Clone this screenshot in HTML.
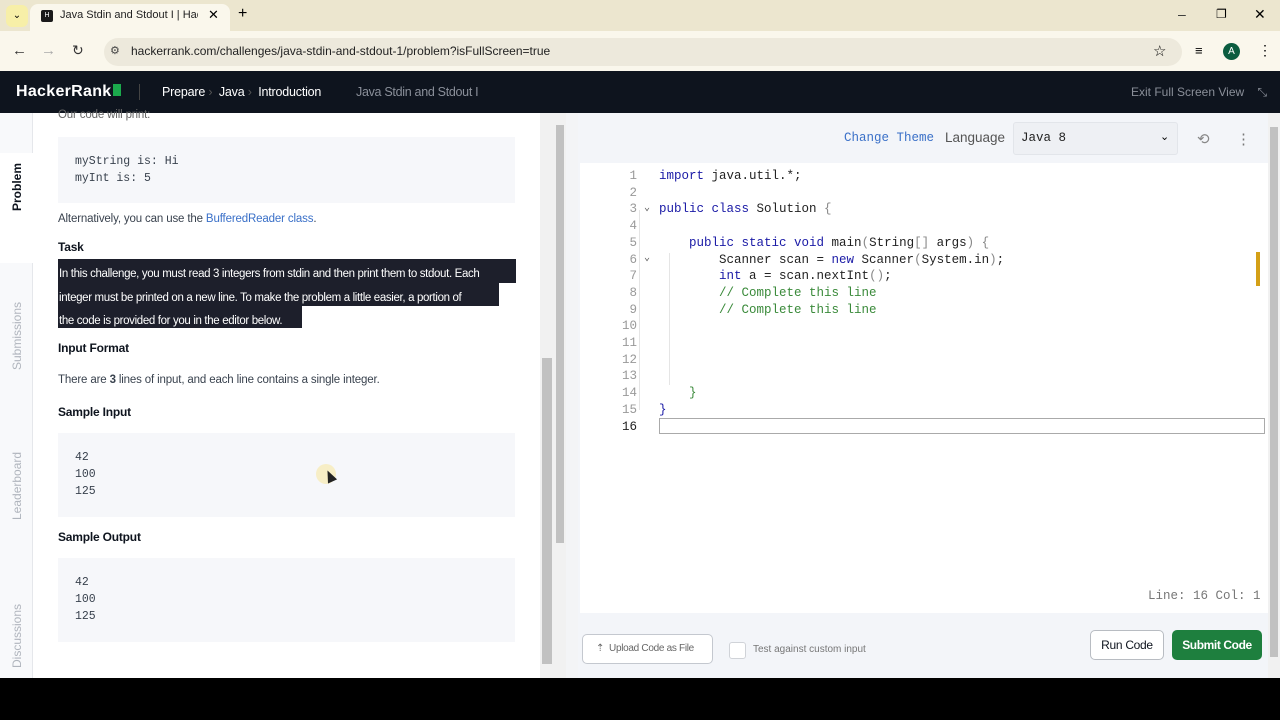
<!DOCTYPE html>
<html><head><meta charset="utf-8"><style>
*{box-sizing:border-box;margin:0;padding:0}
body{width:1280px;height:720px;overflow:hidden;background:#000;font-family:"Liberation Sans",sans-serif;position:relative}
.abs{position:absolute}
.tabs{left:0;top:0;width:1280px;height:31px;background:#ece6cf}
.tab{left:30px;top:4px;width:200px;height:27px;background:#faf7ec;border-radius:8px 8px 0 0}
.addr{left:0;top:31px;width:1280px;height:40px;background:#faf7ec}
.url{left:104px;top:38px;width:1078px;height:28px;background:#ede9dc;border-radius:14px}
.nav{left:0;top:71px;width:1280px;height:42px;background:#0e141e;color:#fff;font-size:12.5px}
.main{left:0;top:113px;width:1280px;height:565px;background:#fff}
.side{left:0;top:113px;width:33px;height:565px;background:#f8f9fb;border-right:1px solid #e5e7eb}
.vt{transform:rotate(-90deg);transform-origin:left top;font-size:12px;white-space:nowrap}
.pre{background:#f6f7fa;font-family:"Liberation Mono",monospace;font-size:11.5px;color:#39424e;line-height:17px}
.p{font-size:11.5px;color:#39424e;letter-spacing:-0.15px}
.h{font-size:12px;font-weight:bold;color:#0e141e;letter-spacing:-0.2px}
.code{font-family:"Liberation Mono",monospace;font-size:12.5px;line-height:16.7px;white-space:pre;color:#222}
.ln{color:#999;text-align:right;width:40px}
.kw{color:#1a1aa6}.cm{color:#3a8a3a}.br{color:#888}
</style></head><body>
<div class="abs tabs"></div>
<div class="abs" style="left:6px;top:5px;width:22px;height:22px;background:#f7efa8;border-radius:6px;font-size:10px;text-align:center;line-height:22px">⌄</div>
<div class="abs tab"></div>
<div class="abs" style="left:41px;top:10px;width:12px;height:12px;background:#1a1a1a;border-radius:2px;color:#fff;font-size:7px;line-height:12px;text-align:center">H</div>
<div class="abs" style="left:60px;top:9px;font-size:11px;color:#222;width:138px;overflow:hidden;white-space:nowrap">Java Stdin and Stdout I | Hacker</div>
<div class="abs" style="left:208px;top:7px;font-size:13px">✕</div>
<div class="abs" style="left:238px;top:5px;font-size:16px">+</div>
<div class="abs" style="left:1178px;top:6px;font-size:14px;color:#333">–</div>
<div class="abs" style="left:1216px;top:7px;font-size:12px">❐</div>
<div class="abs" style="left:1254px;top:6px;font-size:14px">✕</div>
<div class="abs addr"></div>
<div class="abs" style="left:12px;top:42px;font-size:15px;color:#333">←</div>
<div class="abs" style="left:41px;top:42px;font-size:15px;color:#aaa">→</div>
<div class="abs" style="left:72px;top:42px;font-size:14px;color:#333">↻</div>
<div class="abs url"></div>
<div class="abs" style="left:110px;top:44px;font-size:11px;color:#444">⚙</div>
<div class="abs" style="left:131px;top:44px;font-size:12px;color:#222">hackerrank.com/challenges/java-stdin-and-stdout-1/problem?isFullScreen=true</div>
<div class="abs" style="left:1153px;top:42px;font-size:15px">☆</div>
<div class="abs" style="left:1195px;top:43px;font-size:13px">≡</div>
<div class="abs" style="left:1223px;top:43px;width:17px;height:17px;border-radius:50%;background:#0b5c3f;color:#fff;font-size:10px;text-align:center;line-height:17px">A</div>
<div class="abs" style="left:1258px;top:42px;font-size:14px">⋮</div>
<div class="abs nav">
<div class="abs" style="left:16px;top:12px;font-size:16px;font-weight:bold;letter-spacing:.3px">HackerRank<span style="display:inline-block;width:8px;height:12px;background:#1ba94c;margin-left:1px"></span></div>
<div class="abs" style="left:139px;top:13px;width:1px;height:16px;background:#444"></div>
<div class="abs" style="left:162px;top:14px;letter-spacing:-0.2px">Prepare <span style="color:#555">›</span> &nbsp;Java <span style="color:#555">›</span> &nbsp;Introduction</div>
<div class="abs" style="left:356px;top:14px;color:#8a8f99;letter-spacing:-0.3px">Java Stdin and Stdout I</div>
<div class="abs" style="left:1131px;top:14px;color:#8a8f99;font-size:12px">Exit Full Screen View &nbsp;&nbsp;&nbsp;⤡</div>
</div>
<div class="abs main"></div>
<div class="abs side">
<div class="abs" style="left:0;top:40px;width:33px;height:110px;background:#fff"></div>
<div class="abs vt" style="left:10px;top:98px;font-weight:bold;font-size:12px;color:#0e141e">Problem</div>
<div class="abs vt" style="left:10px;top:257px;color:#b0b5bd">Submissions</div>
<div class="abs vt" style="left:10px;top:407px;color:#b0b5bd">Leaderboard</div>
<div class="abs vt" style="left:10px;top:555px;color:#b0b5bd">Discussions</div>
</div>
<div class="abs p" style="left:58px;top:109px;color:#666">Our code will print:</div>
<div class="abs pre" style="left:58px;top:137px;width:457px;height:66px;padding:16px 17px">myString is: Hi<br>myInt is: 5</div>
<div class="abs p" style="left:58px;top:213px">Alternatively, you can use the <span style="color:#3a70c8">BufferedReader class</span>.</div>
<div class="abs h" style="left:58px;top:240px">Task</div>
<div class="abs" style="left:58px;top:259px;width:458px;height:24px;background:#1d1f2b"></div>
<div class="abs" style="left:58px;top:283px;width:441px;height:23px;background:#1d1f2b"></div>
<div class="abs" style="left:58px;top:306px;width:244px;height:22px;background:#1d1f2b"></div>
<div class="abs" style="left:59px;top:263px;font-size:11.5px;color:#fff;line-height:23.5px;white-space:nowrap;letter-spacing:-0.35px">In this challenge, you must read 3 integers from stdin and then print them to stdout. Each<br>integer must be printed on a new line. To make the problem a little easier, a portion of<br>the code is provided for you in the editor below.</div>
<div class="abs h" style="left:58px;top:341px">Input Format</div>
<div class="abs p" style="left:58px;top:374px">There are <b>3</b> lines of input, and each line contains a single integer.</div>
<div class="abs h" style="left:58px;top:405px">Sample Input</div>
<div class="abs pre" style="left:58px;top:433px;width:457px;height:84px;padding:16px 17px">42<br>100<br>125</div>
<div class="abs h" style="left:58px;top:530px">Sample Output</div>
<div class="abs pre" style="left:58px;top:558px;width:457px;height:84px;padding:16px 17px">42<br>100<br>125</div>
<div class="abs" style="left:316px;top:464px;width:20px;height:20px;border-radius:50%;background:rgba(250,225,120,.4)"></div>
<div class="abs" style="left:325px;top:470px;width:0;height:0;border-left:5px solid transparent;border-right:5px solid transparent;border-bottom:12px solid #222;transform:rotate(-25deg)"></div>
<div class="abs" style="left:540px;top:113px;width:14px;height:565px;background:#f1f1f1"></div>
<div class="abs" style="left:542px;top:358px;width:10px;height:306px;background:#c1c1c1"></div>
<div class="abs" style="left:554px;top:113px;width:12px;height:565px;background:#f1f1f1"></div>
<div class="abs" style="left:556px;top:125px;width:8px;height:418px;background:#c1c1c1"></div>
<div class="abs" style="left:566px;top:113px;width:12px;height:565px;background:#f3f4f6"></div>
<div class="abs" style="left:578px;top:113px;width:690px;height:565px;background:#f3f5f9"></div>
<div class="abs" style="left:1268px;top:113px;width:12px;height:565px;background:#f1f1f1"></div>
<div class="abs" style="left:1270px;top:127px;width:8px;height:530px;background:#c1c1c1"></div>
<div class="abs" style="left:844px;top:131px;font-family:'Liberation Mono',monospace;font-size:12.5px;color:#3a70c8">Change Theme</div>
<div class="abs" style="left:945px;top:130px;font-size:13.5px;color:#555">Language</div>
<div class="abs" style="left:1013px;top:122px;width:165px;height:33px;background:#eef0f4;border:1px solid #e2e5ea;border-radius:3px"></div>
<div class="abs" style="left:1021px;top:131px;font-family:'Liberation Mono',monospace;font-size:12.5px;color:#222">Java 8</div>
<div class="abs" style="left:1160px;top:130px;font-size:11px">⌄</div>
<div class="abs" style="left:1197px;top:130px;font-size:15px;color:#888">⟲</div>
<div class="abs" style="left:1236px;top:130px;font-size:15px;color:#777">⋮</div>
<div class="abs" style="left:580px;top:163px;width:688px;height:450px;background:#fff"></div>
<div class="abs" style="left:1256px;top:252px;width:4px;height:34px;background:#d4a017"></div>
<div class="abs" style="left:659px;top:418px;width:606px;height:16px;border:1px solid #aaa"></div>
<div class="abs" style="left:639px;top:210px;width:1px;height:200px;background:#e5e5e5"></div>
<div class="abs" style="left:669px;top:253px;width:1px;height:132px;background:#e5e5e5"></div>
<div class="abs code ln" style="left:597px;top:168px">1
2
3
4
5
6
7
8
9
10
11
12
13
14
15
<span style="color:#222">16</span></div>
<div class="abs code" style="left:644px;top:201px;color:#555;font-size:10px;line-height:16.7px">⌄


⌄</div>
<div class="abs code" style="left:659px;top:168px"><span class="kw">import</span> java.util.*;

<span class="kw">public class</span> Solution <span class="br">{</span>

    <span class="kw">public static void</span> main<span class="br">(</span>String<span class="br">[]</span> args<span class="br">) {</span>
        Scanner scan = <span class="kw">new</span> Scanner<span class="br">(</span>System.in<span class="br">)</span>;
        <span class="kw">int</span> a = scan.nextInt<span class="br">()</span>;
        <span class="cm">// Complete this line</span>
        <span class="cm">// Complete this line</span>




    <span class="cm">}</span>
<span class="kw">}</span></div>
<div class="abs" style="left:1148px;top:589px;font-family:'Liberation Mono',monospace;font-size:12.5px;color:#777">Line: 16 Col: 1</div>
<div class="abs" style="left:582px;top:634px;width:131px;height:30px;border:1px solid #c4c8cf;border-radius:5px;font-size:10px;color:#666;padding:8px 0 0 13px;background:#fff;letter-spacing:-0.3px">⇡ &nbsp;Upload Code as File</div>
<div class="abs" style="left:729px;top:642px;width:17px;height:17px;border:1px solid #d0d3d8;border-radius:3px;background:#fff"></div>
<div class="abs" style="left:753px;top:644px;font-size:10px;color:#777">Test against custom input</div>
<div class="abs" style="left:1090px;top:630px;width:74px;height:30px;border:1px solid #b8bcc2;border-radius:5px;font-size:12px;color:#0e141e;text-align:center;line-height:28px;background:#fff;letter-spacing:-0.3px">Run Code</div>
<div class="abs" style="left:1172px;top:630px;width:90px;height:30px;background:#1e7f3e;border-radius:5px;font-size:12px;color:#fff;text-align:center;line-height:30px;font-weight:bold;letter-spacing:-0.4px">Submit Code</div>
</body></html>
